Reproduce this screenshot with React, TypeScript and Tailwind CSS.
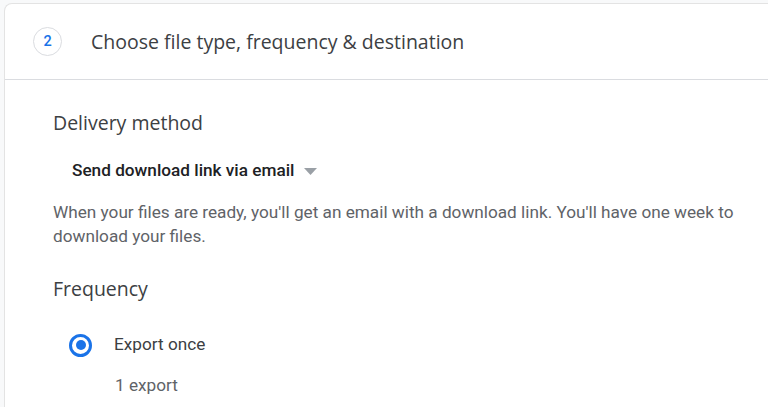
export default function App() {
  return (
    <div className="min-h-screen bg-[#f8f9fa] pl-[4px] pt-[3px]" style={{ fontFamily: 'Roboto, Arial, sans-serif' }}>
      <div className="bg-white border-l border-t border-[#e3e3e3] rounded-tl-[8px] min-h-[404px]">
        {/* step header */}
        <div className="flex items-center h-[76px] border-b border-[#dadce0] pl-[28px]">
          <div className="w-[29px] h-[29px] rounded-full border border-[#dadce0] flex items-center justify-center text-[14.5px] font-medium text-[#1a73e8]">
            2
          </div>
          <div className="ml-[29px] text-[19.5px] text-[#3c4043]" style={{ fontFamily: '"Open Sans", Roboto, sans-serif' }}>
            Choose file type, frequency &amp; destination
          </div>
        </div>

        <div className="pl-[48px] pr-[20px]">
          <div className="pt-[31px] text-[19.5px] text-[#3c4043] leading-[24px]" style={{ fontFamily: '"Open Sans", Roboto, sans-serif' }}>
            Delivery method
          </div>

          <div className="mt-[24px] ml-[19px] flex items-center h-[24px]">
            <span className="text-[17.2px] font-medium text-[#202124]">Send download link via email</span>
            <svg className="ml-[10px]" width="13" height="7" viewBox="0 0 13 7">
              <path d="M0 0h13L6.5 7z" fill="#9aa0a6" />
            </svg>
          </div>

          <p className="mt-[17px] text-[17.2px] leading-[24px] text-[#5f6368] max-w-[700px]">
            When your files are ready, you'll get an email with a download link. You'll have one week to download your files.
          </p>

          <div className="mt-[29px] text-[19.5px] text-[#3c4043] leading-[24px]" style={{ fontFamily: '"Open Sans", Roboto, sans-serif' }}>
            Frequency
          </div>

          <div className="mt-[32px] ml-[16px] flex items-center h-[24px]">
            <div className="w-[23px] h-[23px] rounded-full border-[3px] border-[#1a73e8] flex items-center justify-center">
              <div className="w-[10px] h-[10px] rounded-full bg-[#1a73e8]" />
            </div>
            <span className="ml-[22px] text-[17.2px] text-[#3c4043]">Export once</span>
          </div>

          <div className="mt-[16px] ml-[62px] text-[17.2px] text-[#5f6368] leading-[24px]">1 export</div>
        </div>
      </div>
    </div>
  );
}
